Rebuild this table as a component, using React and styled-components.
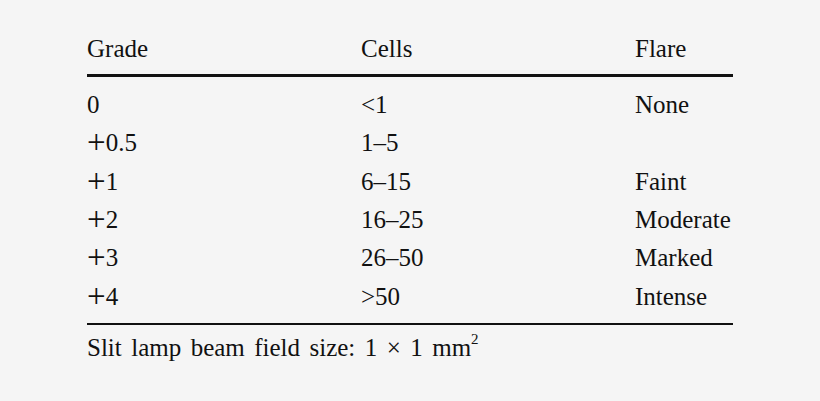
import React from 'react';
import styled, { createGlobalStyle } from 'styled-components';

const Global = createGlobalStyle`
  html, body {
    margin: 0;
    padding: 0;
    background: #f5f5f5;
  }
  body {
    width: 820px;
    height: 401px;
    overflow: hidden;
    font-family: "Liberation Serif", "Times New Roman", serif;
    color: #111111;
  }
`

const Page = styled.div`
  width: 820px;
  height: 401px;
  padding: 30px 87px 0 87px;
  box-sizing: border-box;
  background: #f5f5f5;
`

const Table = styled.div`
  width: 646px;
  font-size: 25px;
`

const Row = styled.div`
  display: grid;
  grid-template-columns: 274px 274px 1fr;
  height: ${p => p.$h || 38.33}px;
  line-height: ${p => p.$h || 38.33}px;
  white-space: nowrap;
`

const Plus = styled.span`
  font-size: 33px;
  line-height: 0;
  vertical-align: -2px;
`

const Rule = styled.div`
  height: ${p => p.$thick}px;
  background: #111111;
  margin: ${p => p.$m};
`

const Body = styled.div`
  padding: 9px 0 7px;
`

const Note = styled.div`
  font-size: 25px;
  line-height: 38px;
  margin-top: 4px;
  word-spacing: 3.2px;
  white-space: nowrap;
  sup {
    font-size: 15px;
    line-height: 0;
    vertical-align: 12px;
  }
`

const header = ['Grade', 'Cells', 'Flare'];
const rows = [
  ['0', '<1', 'None'],
  ['+0.5', '1–5', ''],
  ['+1', '6–15', 'Faint'],
  ['+2', '16–25', 'Moderate'],
  ['+3', '26–50', 'Marked'],
  ['+4', '>50', 'Intense'],
];

function Grade({ value }) {
  if (value.startsWith('+')) {
    return <span><Plus>+</Plus>{value.slice(1)}</span>
  }
  return <span>{value}</span>
}

export default function App() {
  return (
    <>
      <Global />
      <Page>
        <Table>
          <Row $h={38}>
            {header.map(h => <span key={h}>{h}</span>)}
          </Row>
          <Rule $thick={3} $m="6px 0 0" />
          <Body>
            {rows.map(r => (
              <Row key={r[0]}>
                <Grade value={r[0]} />
                <span>{r[1]}</span>
                <span>{r[2]}</span>
              </Row>
            ))}
          </Body>
          <Rule $thick={2} $m="0" />
          <Note>Slit lamp beam field size: 1 × 1 mm<sup>2</sup></Note>
        </Table>
      </Page>
    </>
  )
}
